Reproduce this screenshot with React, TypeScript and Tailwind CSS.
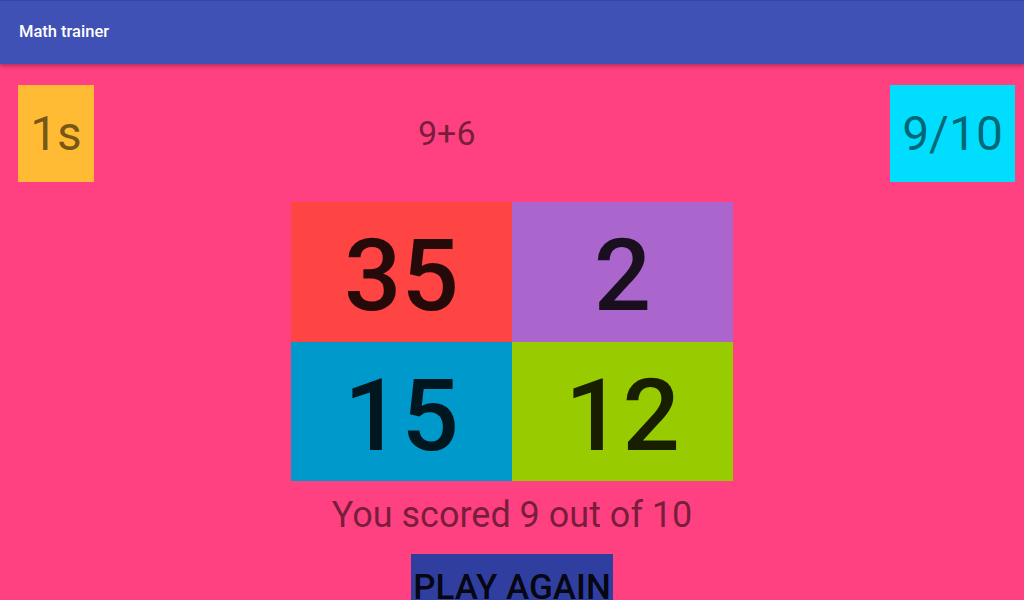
import React from "react";

const answers = [
  { value: 35, bg: "bg-[#ff4444]" },
  { value: 2, bg: "bg-[#aa66cc]" },
  { value: 15, bg: "bg-[#0099cc]" },
  { value: 12, bg: "bg-[#99cc00]" },
];

function App() {
  return (
    <div
      className="h-[600px] w-[1024px] overflow-hidden bg-[#ff4081] flex flex-col"
      style={{ fontFamily: "Roboto, 'Noto Sans', sans-serif" }}
    >
      <div className="h-[64px] shrink-0 bg-[#3f51b5] border-t border-[#3446a8] shadow-[0_2px_4px_rgba(0,0,0,0.3)] flex items-center px-[19px] relative z-10">
        <span className="text-white text-[16.5px] font-medium">Math trainer</span>
      </div>

      <div className="flex items-start mt-[21px] pl-[18px] pr-[9px]">
        <div className="w-[76px] h-[97px] bg-[#ffbb33] flex items-center justify-center">
          <span className="text-[48px] text-black/55">1s</span>
        </div>
        <div className="ml-[324px] h-[97px] flex items-center">
          <span className="text-[34px] text-black/55">9+6</span>
        </div>
        <div className="ml-auto w-[125px] h-[97px] bg-[#00ddff] flex items-center justify-center">
          <span className="text-[48px] text-black/55">9/10</span>
        </div>
      </div>

      <div className="mt-[20px] mx-auto w-[442px] grid grid-cols-2">
        {answers.map((a) => (
          <div
            key={a.value}
            className={`h-[139.5px] flex items-center justify-center pt-[8px] ${a.bg}`}
          >
            <span className="text-[101px] font-medium text-black/85 leading-none">{a.value}</span>
          </div>
        ))}
      </div>

      <div className="mt-[13px] text-center text-[36px] leading-[42px] text-black/55">
        You scored 9 out of 10
      </div>

      <div className="mt-[18px] mx-auto w-[202px] h-[60px] shrink-0 bg-[#303f9f] flex justify-center pt-[13px]">
        <span className="whitespace-nowrap text-[35px] font-medium text-black/90 leading-[42px]">PLAY AGAIN</span>
      </div>

      <div className="mt-auto h-[2px] shrink-0 bg-[#1f2430] relative z-10" />
    </div>
  );
}

export default App;
